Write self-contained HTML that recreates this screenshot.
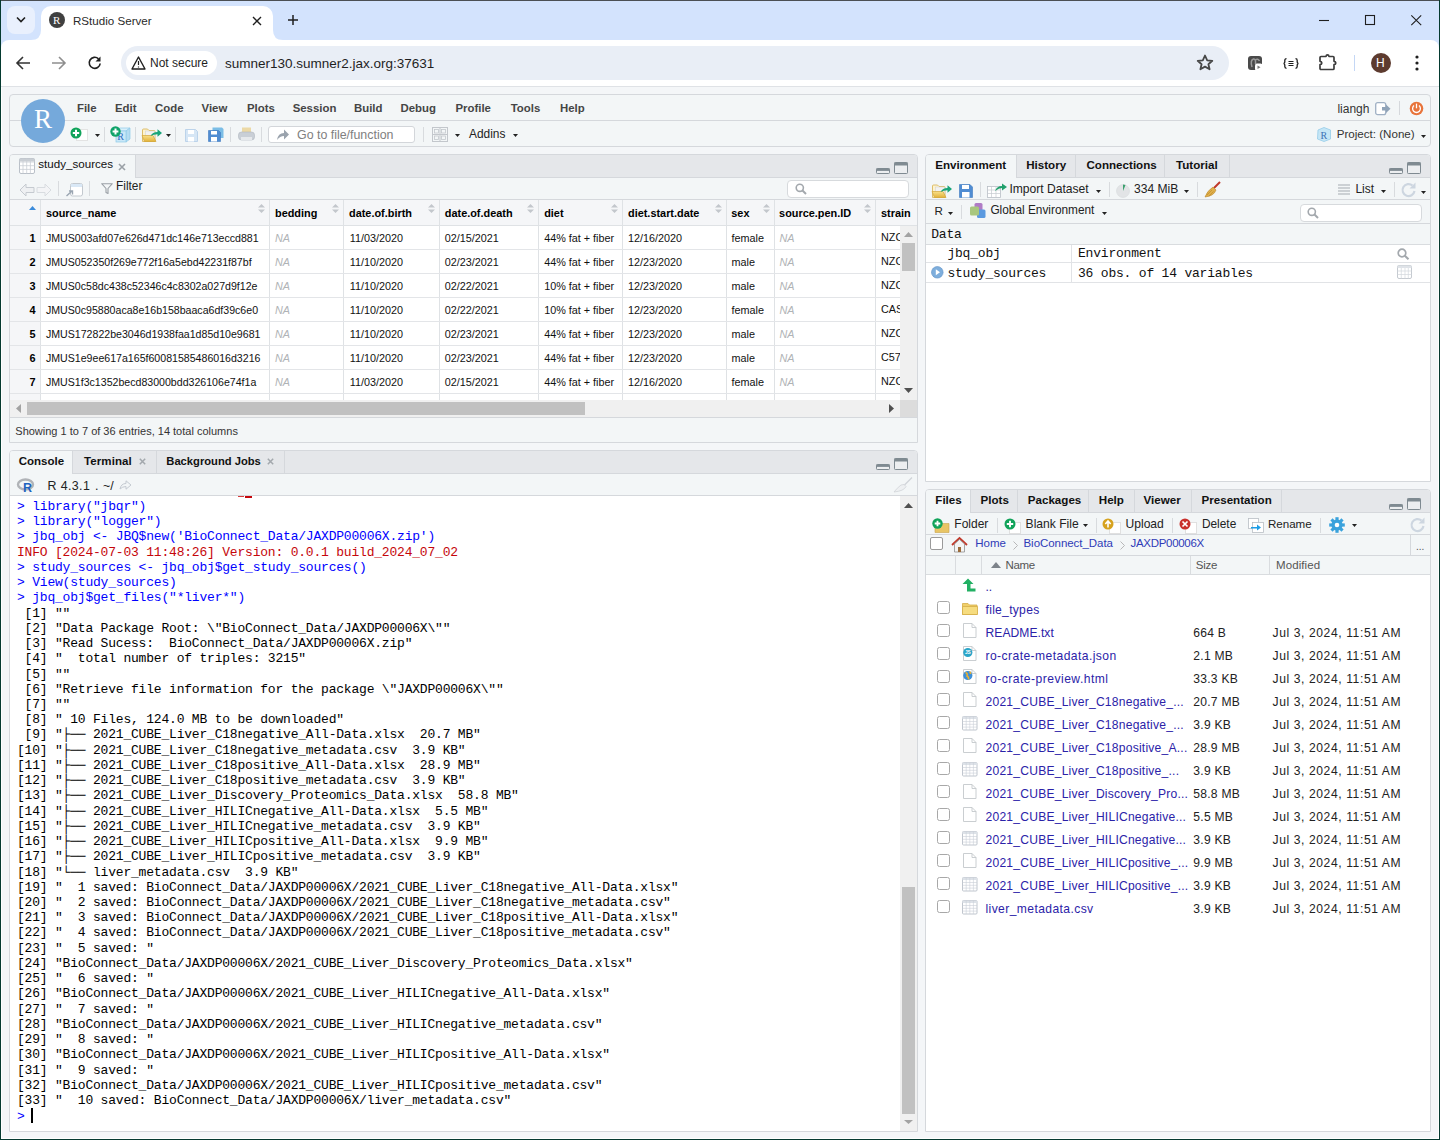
<!DOCTYPE html>
<html><head><meta charset="utf-8">
<style>
*{box-sizing:border-box}
html,body{margin:0;padding:0}
body{width:1440px;height:1140px;position:relative;overflow:hidden;background:#f4f6f8;font-family:"Liberation Sans",sans-serif;color:#000}
.a{position:absolute}
.t{position:absolute;white-space:nowrap;line-height:1}
.mono{font-family:"Liberation Mono",monospace}
svg{position:absolute;overflow:visible}
</style></head><body>
<!-- window frame -->
<div class="a" style="left:0;top:0;width:1440px;height:1px;background:#4b4f54"></div>
<div class="a" style="left:1px;top:1px;width:1px;height:1138px;background:#fff"></div>
<div class="a" style="left:1438px;top:1px;width:1px;height:1138px;background:#fff"></div>
<div class="a" style="left:1px;top:1138px;width:1438px;height:1px;background:#fff"></div>
<div class="a" style="left:0;top:0;width:1px;height:1140px;background:#053a30"></div>
<div class="a" style="left:1439px;top:0;width:1px;height:1140px;background:#053a30"></div>
<div class="a" style="left:0;top:1139px;width:1440px;height:1px;background:#053a30"></div>

<!-- CHROME TAB STRIP -->
<div class="a" style="left:1px;top:1px;width:1438px;height:39px;background:#d3e3fd"></div>
<div class="a" style="left:7px;top:6px;width:28px;height:28px;border-radius:8px;background:#e9f0fd"></div>
<svg style="left:0;top:0" width="40" height="40"><path d="M17 17.5 L21 21.5 L25 17.5" fill="none" stroke="#1f1f1f" stroke-width="1.6"/></svg>
<!-- active tab -->
<div class="a" style="left:41px;top:6px;width:232px;height:35px;background:#fff;border-radius:10px 10px 0 0"></div>
<svg style="left:31px;top:30px" width="252" height="11"><path d="M0 10 Q10 10 10 0 L10 10 Z" fill="#fff"/><path d="M242 0 Q242 10 252 10 L242 10 Z" fill="#fff"/></svg>
<div class="a" style="left:49px;top:12px;width:16px;height:16px;border-radius:50%;background:#404040"></div>
<div class="t" style="left:53px;top:15px;font-family:'Liberation Serif',serif;font-size:11px;color:#fff">R</div>
<div class="t" style="left:73px;top:15px;font-size:11.6px;color:#2a2a2a">RStudio Server</div>
<svg style="left:252px;top:16px" width="10" height="10"><path d="M1 1 L9 9 M9 1 L1 9" stroke="#1f1f1f" stroke-width="1.4"/></svg>
<svg style="left:288px;top:15px" width="10" height="10"><path d="M5 0 V10 M0 5 H10" stroke="#1f1f1f" stroke-width="1.5"/></svg>
<!-- window controls -->
<svg style="left:1319px;top:20px" width="11" height="2"><path d="M0 0.5 H10" stroke="#1f1f1f" stroke-width="1.1"/></svg>
<svg style="left:1365px;top:15px" width="11" height="11"><rect x="0.5" y="0.5" width="9" height="9" fill="none" stroke="#1f1f1f" stroke-width="1.1"/></svg>
<svg style="left:1411px;top:15px" width="11" height="11"><path d="M0.3 0.3 L10.2 10.2 M10.2 0.3 L0.3 10.2" stroke="#1f1f1f" stroke-width="1.1"/></svg>

<!-- CHROME TOOLBAR -->
<div class="a" style="left:1px;top:40px;width:1438px;height:8px;background:#d3e3fd"></div><div class="a" style="left:1px;top:40px;width:1438px;height:47px;background:#fff;border-radius:8px 8px 0 0"></div>
<div class="a" style="left:1px;top:86px;width:1438px;height:1px;background:#dfe2e6"></div>
<svg style="left:15px;top:55px" width="16" height="16"><path d="M15 8 H2 M8 2 L2 8 L8 14" fill="none" stroke="#333" stroke-width="1.6"/></svg>
<svg style="left:51px;top:55px" width="16" height="16"><path d="M1 8 H14 M8 2 L14 8 L8 14" fill="none" stroke="#8e8e8e" stroke-width="1.6"/></svg>
<svg style="left:87px;top:55px" width="16" height="16"><path d="M13.2 8.5 A5.5 5.5 0 1 1 11.5 3.8" fill="none" stroke="#1f1f1f" stroke-width="1.6"/><path d="M13.5 1.5 V6.5 H8.5 Z" fill="#1f1f1f"/></svg>
<div class="a" style="left:121px;top:46px;width:1108px;height:34px;border-radius:17px;background:#e9eef6"></div>
<div class="a" style="left:126px;top:51px;width:91px;height:24px;border-radius:12px;background:#fff"></div>
<svg style="left:131px;top:56px" width="15" height="14"><path d="M7.5 1 L14 13 H1 Z" fill="none" stroke="#1f1f1f" stroke-width="1.4" stroke-linejoin="round"/><path d="M7.5 5 V9 M7.5 10.5 V11.5" stroke="#1f1f1f" stroke-width="1.2"/></svg>
<div class="t" style="left:150px;top:57px;font-size:12px;color:#1f1f1f">Not secure</div>
<div class="t" style="left:225px;top:57px;font-size:13.5px;color:#1f1f1f">sumner130.sumner2.jax.org:37631</div>
<svg style="left:1196px;top:54px" width="18" height="18"><path d="M9 1.5 L11.2 6.3 L16.3 6.8 L12.4 10.2 L13.6 15.3 L9 12.6 L4.4 15.3 L5.6 10.2 L1.7 6.8 L6.8 6.3 Z" fill="none" stroke="#474747" stroke-width="1.8" stroke-linejoin="round"/></svg>
<svg style="left:1247px;top:55px" width="17" height="17"><rect x="1" y="1" width="14" height="14" rx="3" fill="#4a4a4a"/><path d="M5 12 Q3 5 6.5 4 Q9 3.5 8.5 9 M8 5 Q11 3 12.5 6" fill="none" stroke="#9a9a9a" stroke-width="1.5"/><rect x="8" y="8.5" width="7.5" height="7.5" rx="2" fill="#fff"/><path d="M10.5 10.5 L13.5 12.2 L10.5 14 Z" fill="#777"/></svg>
<svg style="left:1283px;top:58px" width="16" height="11"><path d="M3.5 0.7 Q1.8 0.7 1.8 2.5 V4 Q1.8 5.3 0.6 5.5 Q1.8 5.7 1.8 7 V8.5 Q1.8 10.3 3.5 10.3 M12.5 0.7 Q14.2 0.7 14.2 2.5 V4 Q14.2 5.3 15.4 5.5 Q14.2 5.7 14.2 7 V8.5 Q14.2 10.3 12.5 10.3" fill="none" stroke="#1f1f1f" stroke-width="1.3"/><path d="M5.5 3.5 H10.5 M5.5 5.5 H10.5 M5.5 7.5 H10.5" stroke="#1f1f1f" stroke-width="1.1"/></svg>
<svg style="left:1318px;top:52px" width="21" height="20"><path d="M3 4.5 H8 Q8.2 2.8 9.5 2.8 Q10.8 2.8 11 4.5 H15 Q16 4.5 16 5.5 V9.3 Q17.8 9.5 17.8 11 Q17.8 12.5 16 12.7 V16.5 Q16 17.5 15 17.5 H3 Q2 17.5 2 16.5 V12.7 Q3.8 12.5 3.8 11 Q3.8 9.5 2 9.3 V5.5 Q2 4.5 3 4.5 Z" fill="none" stroke="#3c3c3c" stroke-width="1.7" stroke-linejoin="round"/></svg>
<div class="a" style="left:1354px;top:55px;width:1px;height:16px;background:#c4d7f5"></div>
<div class="a" style="left:1371px;top:53px;width:20px;height:20px;border-radius:50%;background:#5d3b2f"></div>
<div class="t" style="left:1376px;top:57px;font-size:12px;color:#fff">H</div>
<svg style="left:1414px;top:55px" width="6" height="16"><circle cx="3" cy="2" r="1.6" fill="#1f1f1f"/><circle cx="3" cy="8" r="1.6" fill="#1f1f1f"/><circle cx="3" cy="14" r="1.6" fill="#1f1f1f"/></svg>

<!-- RSTUDIO MENU + TOOLBAR -->
<div class="a" style="left:9px;top:94px;width:1422px;height:53px;border:1px solid #d5d8dc;border-radius:4px;background:#f3f6f7"></div>
<div class="a" style="left:10px;top:120px;width:1420px;height:1px;background:#d5d8dc"></div>
<div class="a" style="left:21px;top:99px;width:44px;height:44px;border-radius:50%;background:#75a9db"></div>
<div class="t" style="left:34px;top:106px;font-family:'Liberation Serif',serif;font-size:27px;color:#fff">R</div>

<!-- menu items -->
<div class="t" style="top:103px;font-size:11.4px;font-weight:bold;color:#454545;left:77px">File</div>
<div class="t" style="top:103px;font-size:11.4px;font-weight:bold;color:#454545;left:115px">Edit</div>
<div class="t" style="top:103px;font-size:11.4px;font-weight:bold;color:#454545;left:155px">Code</div>
<div class="t" style="top:103px;font-size:11.4px;font-weight:bold;color:#454545;left:201.5px">View</div>
<div class="t" style="top:103px;font-size:11.4px;font-weight:bold;color:#454545;left:247px">Plots</div>
<div class="t" style="top:103px;font-size:11.4px;font-weight:bold;color:#454545;left:292.7px">Session</div>
<div class="t" style="top:103px;font-size:11.4px;font-weight:bold;color:#454545;left:354px">Build</div>
<div class="t" style="top:103px;font-size:11.4px;font-weight:bold;color:#454545;left:400.5px">Debug</div>
<div class="t" style="top:103px;font-size:11.4px;font-weight:bold;color:#454545;left:455.5px">Profile</div>
<div class="t" style="top:103px;font-size:11.4px;font-weight:bold;color:#454545;left:510.7px">Tools</div>
<div class="t" style="top:103px;font-size:11.4px;font-weight:bold;color:#454545;left:560px">Help</div>
<div class="t" style="top:102.8px;font-size:12px;color:#333;left:1337.4px">liangh</div>
<svg style="left:1375px;top:102px" width="17" height="14"><rect x="0.7" y="0.7" width="10" height="12" rx="2" fill="#fff" stroke="#9fb0c4" stroke-width="1.3"/><path d="M7 5 H11 V2.5 L15.5 6.7 L11 11 V8.5 H7 Z" fill="#8fa3b8"/></svg>
<div class="a" style="left:1399px;top:101px;width:1px;height:14px;background:#d5d8dc"></div>
<svg style="left:1409px;top:101px" width="15" height="15"><circle cx="7.5" cy="7.5" r="6.8" fill="#e8743b"/><path d="M5 4.6 A3.9 3.9 0 1 0 10 4.6" fill="none" stroke="#fff" stroke-width="1.3"/><path d="M7.5 2.6 V7.3" stroke="#fff" stroke-width="1.3"/></svg>

<!-- toolbar icons -->
<div class="a" style="left:76px;top:129px;width:12px;height:12px;background:#fff;border:1px solid #e3e3e3"></div>
<svg style="left:70px;top:127px" width="12" height="12"><circle cx="6" cy="6" r="5.5" fill="#10a35a"/><path d="M6 2.8 V9.2 M2.8 6 H9.2" stroke="#fff" stroke-width="2"/></svg>
<svg style="left:95.0px;top:133.5px" width="5" height="3"><path d="M0 0 H5 L2.5 3 Z" fill="#222"/></svg>
<div class="a" style="left:104px;top:127px;width:1px;height:15px;background:#d8dbde"></div>
<svg style="left:110px;top:126px" width="22" height="19"><path d="M6 5 L10 2 H20 L16 5 Z" fill="#d9effb" stroke="#8ecae8" stroke-width="0.7"/><path d="M16 5 L20 2 V13 L16 16 Z" fill="#b4dcf2" stroke="#8ecae8" stroke-width="0.7"/><rect x="6" y="5" width="10" height="11" fill="#c9e7f8" stroke="#8ecae8" stroke-width="0.7"/><text x="7.2" y="13.8" font-family="Liberation Serif" font-size="10" fill="#2a6cc0">R</text><circle cx="5.5" cy="5.5" r="5.2" fill="#10a36a"/><path d="M5.5 2.6 V8.4 M2.6 5.5 H8.4" stroke="#fff" stroke-width="2"/></svg>
<div class="a" style="left:135px;top:127px;width:1px;height:15px;background:#d8dbde"></div>
<svg style="left:141px;top:127px" width="22" height="16"><defs><linearGradient id="fg" x1="0" y1="0" x2="0" y2="1"><stop offset="0" stop-color="#f9e08a"/><stop offset="1" stop-color="#e2b23a"/></linearGradient></defs><path d="M1.5 3 Q1.5 2 2.5 2 H6.5 L8 3.5 H13 Q14 3.5 14 4.5 V14.5 H1.5 Z" fill="#fdf3cf" stroke="#d6b04e" stroke-width="0.8"/><rect x="4.5" y="4" width="9" height="7" fill="#f2f2f2" stroke="#cfcfcf" stroke-width="0.5"/><path d="M1 8.5 H12 L15 14.5 H3.5 Z" fill="url(#fg)" stroke="#d3a63a" stroke-width="0.7"/><path d="M9.5 9 Q11.5 5 16.5 5 V2.2 L21 6 L16.5 9.8 V7.2 Q12.5 7.2 9.5 9 Z" fill="#19a57a"/></svg>
<svg style="left:166.0px;top:133.5px" width="5" height="3"><path d="M0 0 H5 L2.5 3 Z" fill="#222"/></svg>
<div class="a" style="left:175px;top:127px;width:1px;height:15px;background:#d8dbde"></div>
<svg style="left:185px;top:129px" width="13" height="13"><path d="M0.5 0.5 H10.5 L12.5 2.5 V12.5 H0.5 Z" fill="#d6e6f5" stroke="#bcd3ea"/><rect x="3" y="1" width="6" height="4" fill="#fff"/><rect x="3" y="8" width="6" height="4.5" fill="#fff"/></svg>
<svg style="left:208px;top:127px" width="16" height="15"><path d="M4.5 0.5 H14 L15.5 2 V11 H4.5 Z" fill="#7bbde6"/><path d="M0.5 3.5 H10.5 L12.5 5.5 V14.5 H0.5 Z" fill="#4f8cd2" stroke="#3c78c0" stroke-width="0.6"/><rect x="3" y="4" width="6" height="3.5" fill="#fff"/><rect x="3" y="10" width="6" height="4.5" fill="#fff"/></svg>
<div class="a" style="left:230px;top:127px;width:1px;height:15px;background:#d8dbde"></div>
<svg style="left:238px;top:127px" width="17" height="15"><rect x="4" y="0.5" width="9" height="7" fill="#ecd9a6"/><rect x="0.5" y="5" width="16" height="8" rx="3" fill="#c9cfd6" stroke="#b0b7bf" stroke-width="0.6"/><rect x="3" y="10" width="11" height="3" fill="#e6e9ec"/></svg>
<div class="a" style="left:261px;top:127px;width:1px;height:15px;background:#d8dbde"></div>
<div class="a" style="left:268px;top:126px;width:147px;height:17px;border:1px solid #d3d6da;border-radius:3px;background:#fff"></div>
<svg style="left:276px;top:128px" width="14" height="13"><path d="M1 12 Q2 5 8 5 V1.5 L13 6.5 L8 11.5 V8 Q4 8 1 12 Z" fill="#9aa3ad"/></svg>
<div class="t" style="left:297px;top:129px;font-size:12.4px;color:#808080;width:97px;overflow:hidden">Go to file/function</div>
<div class="a" style="left:423px;top:127px;width:1px;height:15px;background:#d8dbde"></div>
<svg style="left:432px;top:127px" width="16" height="15"><rect x="0.5" y="0.5" width="15" height="14" fill="none" stroke="#c3c7cc"/><path d="M1 7.5 H15 M8 1 V14" stroke="#c3c7cc"/><rect x="2.5" y="2.5" width="4" height="3.5" fill="none" stroke="#c3c7cc" stroke-width="0.8"/><rect x="9.5" y="2.5" width="4" height="3.5" fill="none" stroke="#c3c7cc" stroke-width="0.8"/><rect x="2.5" y="9" width="4" height="3.5" fill="none" stroke="#c3c7cc" stroke-width="0.8"/><rect x="9.5" y="9" width="4" height="3.5" fill="none" stroke="#c3c7cc" stroke-width="0.8"/></svg>
<svg style="left:455.0px;top:133.5px" width="5" height="3"><path d="M0 0 H5 L2.5 3 Z" fill="#222"/></svg>
<div class="t" style="left:469px;top:128.5px;font-size:11.9px;color:#222">Addins</div>
<svg style="left:513.0px;top:133.5px" width="5" height="3"><path d="M0 0 H5 L2.5 3 Z" fill="#222"/></svg>
<svg style="left:1316px;top:127px" width="16" height="15"><path d="M2 3 L8 0.5 L14.5 3 V12 L8 14.5 L1.5 12 Z" fill="#c5e6f6" stroke="#94cbe8" stroke-width="0.8"/><text x="4.5" y="11.5" font-family="Liberation Serif" font-size="10" fill="#3b72b5">R</text></svg>
<div class="t" style="left:1336.7px;top:127.5px;font-size:11.6px;color:#333">Project: (None)</div>
<svg style="left:1421.0px;top:134.5px" width="5" height="3"><path d="M0 0 H5 L2.5 3 Z" fill="#222"/></svg>

<div class="a" style="left:9px;top:154px;width:909px;height:289px;background:#f3f6f7;border:1px solid #d5d8dc;border-radius:4px 4px 0 0"></div>
<div class="a" style="left:10px;top:155px;width:907px;height:22px;background:#e5e7ea;border-radius:3px 3px 0 0"></div>
<div class="a" style="left:10px;top:177px;width:907px;height:1px;background:#d5d8dc"></div>
<div class="a" style="left:10px;top:155px;width:126px;height:23px;background:#f3f6f7;border-right:1px solid #d5d8dc;border-radius:3px 0 0 0"></div>
<svg style="left:19px;top:158px" width="16" height="16"><rect x="0.5" y="0.5" width="15" height="15" rx="1.5" fill="#fff" stroke="#b9c0c8"/><path d="M0.5 4 H15.5 M0.5 7.7 H15.5 M0.5 11.4 H15.5 M4 0.5 V15.5 M7.7 0.5 V15.5 M11.4 0.5 V15.5" stroke="#c9ced4" stroke-width="0.8"/><rect x="0.5" y="0.5" width="15" height="3" fill="#c9ced4"/></svg>
<div class="t" style="left:38.3px;top:158px;font-size:11.6px;color:#111">study_sources</div>
<svg style="left:118px;top:163px" width="8" height="8"><path d="M1 1 L7 7 M7 1 L1 7" stroke="#9aa0a6" stroke-width="1.6"/></svg>
<svg style="left:876px;top:168px" width="14" height="6"><rect x="0.5" y="0.5" width="13" height="5" rx="0.8" fill="#eceef0" stroke="#7f8a91" stroke-width="1"/><path d="M0.5 1.7 H13.5" stroke="#7f8a91" stroke-width="2.4"/></svg>
<svg style="left:894px;top:162px" width="14" height="12"><rect x="0.5" y="0.5" width="13" height="11" rx="0.8" fill="#eceef0" stroke="#7f8a91" stroke-width="1"/><path d="M0.5 2 H13.5" stroke="#7f8a91" stroke-width="3"/></svg>
<div class="a" style="left:10px;top:199px;width:907px;height:1px;background:#d5d8dc"></div>
<svg style="left:19px;top:183px" width="16" height="14"><path d="M7 1 L1 7 L7 13 V9.5 H15 V4.5 H7 Z" fill="#eef0f2" stroke="#c5cad0" stroke-width="1"/></svg>
<svg style="left:36px;top:183px" width="16" height="14"><path d="M9 1 L15 7 L9 13 V9.5 H1 V4.5 H9 Z" fill="#f3f4f6" stroke="#d8dce0" stroke-width="1"/></svg>
<div class="a" style="left:58px;top:181px;width:1px;height:15px;background:#d8dbde"></div>
<svg style="left:66px;top:183px" width="17" height="14"><rect x="4.5" y="0.5" width="12" height="12.5" rx="2" fill="#fff" stroke="#c3c9cf"/><path d="M5 1 H16 V4 H5 Z" fill="#d9e8f6"/><path d="M0.5 13 L6 8 M3 8 H6.5 V11.5" stroke="#9aa5b1" stroke-width="1.4" fill="none"/></svg>
<div class="a" style="left:89px;top:181px;width:1px;height:15px;background:#d8dbde"></div>
<svg style="left:101px;top:183px" width="12" height="11"><path d="M0.7 0.7 H11.3 L7 5.5 V10.5 L5 9.5 V5.5 Z" fill="none" stroke="#9aa0a6" stroke-width="1.1" stroke-linejoin="round"/></svg>
<div class="t" style="left:116px;top:181px;font-size:11.9px;color:#222">Filter</div>
<div class="a" style="left:787px;top:180px;width:122px;height:18px;background:#fff;border:1px solid #d7dadd;border-radius:4px"></div>
<svg style="left:795px;top:183px" width="12" height="12"><circle cx="4.8" cy="4.8" r="3.6" fill="none" stroke="#a3a8ad" stroke-width="1.6"/><path d="M7.5 7.5 L11 11" stroke="#a3a8ad" stroke-width="2"/></svg>
<div class="a" style="left:10px;top:200px;width:907px;height:200px;background:#fff"></div>
<div class="a" style="left:10px;top:200px;width:907px;height:25px;background:#f5f6f8"></div>
<div class="a" style="left:10px;top:225px;width:907px;height:1px;background:#dfe2e5"></div>
<div class="a" style="left:10px;top:226px;width:30px;height:174px;background:#f5f6f8"></div>
<div class="a" style="left:40px;top:200px;width:1px;height:200px;background:#dfe2e5"></div>
<div class="a" style="left:269px;top:200px;width:1px;height:200px;background:#dfe2e5"></div>
<div class="a" style="left:343px;top:200px;width:1px;height:200px;background:#dfe2e5"></div>
<div class="a" style="left:439px;top:200px;width:1px;height:200px;background:#dfe2e5"></div>
<div class="a" style="left:538px;top:200px;width:1px;height:200px;background:#dfe2e5"></div>
<div class="a" style="left:622px;top:200px;width:1px;height:200px;background:#dfe2e5"></div>
<div class="a" style="left:726px;top:200px;width:1px;height:200px;background:#dfe2e5"></div>
<div class="a" style="left:774px;top:200px;width:1px;height:200px;background:#dfe2e5"></div>
<div class="a" style="left:875px;top:200px;width:1px;height:200px;background:#dfe2e5"></div>
<svg style="left:29px;top:206px" width="7" height="4"><path d="M0 4 L3.5 0 L7 4 Z" fill="#3b8bdb"/></svg>
<div class="t" style="left:46px;top:208px;font-size:10.9px;color:#000;font-weight:bold">source_name</div>
<div class="t" style="left:275px;top:208px;font-size:10.9px;color:#000;font-weight:bold">bedding</div>
<div class="t" style="left:349px;top:208px;font-size:10.9px;color:#000;font-weight:bold">date.of.birth</div>
<div class="t" style="left:444.8px;top:208px;font-size:10.9px;color:#000;font-weight:bold">date.of.death</div>
<div class="t" style="left:544.2px;top:208px;font-size:10.9px;color:#000;font-weight:bold">diet</div>
<div class="t" style="left:628px;top:208px;font-size:10.9px;color:#000;font-weight:bold">diet.start.date</div>
<div class="t" style="left:731.3px;top:208px;font-size:10.9px;color:#000;font-weight:bold">sex</div>
<div class="t" style="left:779.1px;top:208px;font-size:10.9px;color:#000;font-weight:bold">source.pen.ID</div>
<div class="t" style="left:881px;top:208px;font-size:10.9px;color:#000;font-weight:bold">strain</div>
<svg style="left:258px;top:204px" width="7" height="9"><path d="M0 3.5 L3.5 0 L7 3.5 Z M0 5.5 L3.5 9 L7 5.5 Z" fill="#c3c7cc"/></svg>
<svg style="left:332px;top:204px" width="7" height="9"><path d="M0 3.5 L3.5 0 L7 3.5 Z M0 5.5 L3.5 9 L7 5.5 Z" fill="#c3c7cc"/></svg>
<svg style="left:428px;top:204px" width="7" height="9"><path d="M0 3.5 L3.5 0 L7 3.5 Z M0 5.5 L3.5 9 L7 5.5 Z" fill="#c3c7cc"/></svg>
<svg style="left:527px;top:204px" width="7" height="9"><path d="M0 3.5 L3.5 0 L7 3.5 Z M0 5.5 L3.5 9 L7 5.5 Z" fill="#c3c7cc"/></svg>
<svg style="left:611px;top:204px" width="7" height="9"><path d="M0 3.5 L3.5 0 L7 3.5 Z M0 5.5 L3.5 9 L7 5.5 Z" fill="#c3c7cc"/></svg>
<svg style="left:715px;top:204px" width="7" height="9"><path d="M0 3.5 L3.5 0 L7 3.5 Z M0 5.5 L3.5 9 L7 5.5 Z" fill="#c3c7cc"/></svg>
<svg style="left:763px;top:204px" width="7" height="9"><path d="M0 3.5 L3.5 0 L7 3.5 Z M0 5.5 L3.5 9 L7 5.5 Z" fill="#c3c7cc"/></svg>
<svg style="left:864px;top:204px" width="7" height="9"><path d="M0 3.5 L3.5 0 L7 3.5 Z M0 5.5 L3.5 9 L7 5.5 Z" fill="#c3c7cc"/></svg>
<div class="a" style="left:10px;top:249px;width:907px;height:1px;background:#e3e5e8"></div>
<div class="t" style="left:29.5px;top:233px;font-size:10.9px;color:#000;font-weight:bold">1</div>
<div class="t" style="left:46px;top:233px;font-size:10.6px;color:#111">JMUS003afd07e626d471dc146e713eccd881</div>
<div class="t" style="left:275px;top:233px;font-size:10.8px;color:#b0b3b6;font-style:italic">NA</div>
<div class="t" style="left:349.7px;top:233px;font-size:10.8px;color:#111">11/03/2020</div>
<div class="t" style="left:444.8px;top:233px;font-size:10.8px;color:#111">02/15/2021</div>
<div class="t" style="left:544.2px;top:233px;font-size:10.8px;color:#111">44% fat + fiber</div>
<div class="t" style="left:628px;top:233px;font-size:10.8px;color:#111">12/16/2020</div>
<div class="t" style="left:731.5px;top:233px;font-size:10.8px;color:#111">female</div>
<div class="t" style="left:779.5px;top:233px;font-size:10.8px;color:#b0b3b6;font-style:italic">NA</div>
<div class="a" style="left:881px;top:232.40px;width:19px;height:14px;overflow:hidden"><div class="t" style="left:0;top:0;font-size:10.8px;color:#111">NZC</div></div>
<div class="a" style="left:10px;top:273px;width:907px;height:1px;background:#e3e5e8"></div>
<div class="t" style="left:29.5px;top:257px;font-size:10.9px;color:#000;font-weight:bold">2</div>
<div class="t" style="left:46px;top:257px;font-size:10.6px;color:#111">JMUS052350f269e772f16a5ebd42231f87bf</div>
<div class="t" style="left:275px;top:257px;font-size:10.8px;color:#b0b3b6;font-style:italic">NA</div>
<div class="t" style="left:349.7px;top:257px;font-size:10.8px;color:#111">11/10/2020</div>
<div class="t" style="left:444.8px;top:257px;font-size:10.8px;color:#111">02/23/2021</div>
<div class="t" style="left:544.2px;top:257px;font-size:10.8px;color:#111">44% fat + fiber</div>
<div class="t" style="left:628px;top:257px;font-size:10.8px;color:#111">12/23/2020</div>
<div class="t" style="left:731.5px;top:257px;font-size:10.8px;color:#111">male</div>
<div class="t" style="left:779.5px;top:257px;font-size:10.8px;color:#b0b3b6;font-style:italic">NA</div>
<div class="a" style="left:881px;top:256.40px;width:19px;height:14px;overflow:hidden"><div class="t" style="left:0;top:0;font-size:10.8px;color:#111">NZC</div></div>
<div class="a" style="left:10px;top:297px;width:907px;height:1px;background:#e3e5e8"></div>
<div class="t" style="left:29.5px;top:281px;font-size:10.9px;color:#000;font-weight:bold">3</div>
<div class="t" style="left:46px;top:281px;font-size:10.6px;color:#111">JMUS0c58dc438c52346c4c8302a027d9f12e</div>
<div class="t" style="left:275px;top:281px;font-size:10.8px;color:#b0b3b6;font-style:italic">NA</div>
<div class="t" style="left:349.7px;top:281px;font-size:10.8px;color:#111">11/10/2020</div>
<div class="t" style="left:444.8px;top:281px;font-size:10.8px;color:#111">02/22/2021</div>
<div class="t" style="left:544.2px;top:281px;font-size:10.8px;color:#111">10% fat + fiber</div>
<div class="t" style="left:628px;top:281px;font-size:10.8px;color:#111">12/23/2020</div>
<div class="t" style="left:731.5px;top:281px;font-size:10.8px;color:#111">male</div>
<div class="t" style="left:779.5px;top:281px;font-size:10.8px;color:#b0b3b6;font-style:italic">NA</div>
<div class="a" style="left:881px;top:280.40px;width:19px;height:14px;overflow:hidden"><div class="t" style="left:0;top:0;font-size:10.8px;color:#111">NZC</div></div>
<div class="a" style="left:10px;top:321px;width:907px;height:1px;background:#e3e5e8"></div>
<div class="t" style="left:29.5px;top:305px;font-size:10.9px;color:#000;font-weight:bold">4</div>
<div class="t" style="left:46px;top:305px;font-size:10.6px;color:#111">JMUS0c95880aca8e16b158baaca6df39c6e0</div>
<div class="t" style="left:275px;top:305px;font-size:10.8px;color:#b0b3b6;font-style:italic">NA</div>
<div class="t" style="left:349.7px;top:305px;font-size:10.8px;color:#111">11/10/2020</div>
<div class="t" style="left:444.8px;top:305px;font-size:10.8px;color:#111">02/22/2021</div>
<div class="t" style="left:544.2px;top:305px;font-size:10.8px;color:#111">10% fat + fiber</div>
<div class="t" style="left:628px;top:305px;font-size:10.8px;color:#111">12/23/2020</div>
<div class="t" style="left:731.5px;top:305px;font-size:10.8px;color:#111">female</div>
<div class="t" style="left:779.5px;top:305px;font-size:10.8px;color:#b0b3b6;font-style:italic">NA</div>
<div class="a" style="left:881px;top:304.40px;width:19px;height:14px;overflow:hidden"><div class="t" style="left:0;top:0;font-size:10.8px;color:#111">CAS</div></div>
<div class="a" style="left:10px;top:345px;width:907px;height:1px;background:#e3e5e8"></div>
<div class="t" style="left:29.5px;top:329px;font-size:10.9px;color:#000;font-weight:bold">5</div>
<div class="t" style="left:46px;top:329px;font-size:10.6px;color:#111">JMUS172822be3046d1938faa1d85d10e9681</div>
<div class="t" style="left:275px;top:329px;font-size:10.8px;color:#b0b3b6;font-style:italic">NA</div>
<div class="t" style="left:349.7px;top:329px;font-size:10.8px;color:#111">11/10/2020</div>
<div class="t" style="left:444.8px;top:329px;font-size:10.8px;color:#111">02/23/2021</div>
<div class="t" style="left:544.2px;top:329px;font-size:10.8px;color:#111">44% fat + fiber</div>
<div class="t" style="left:628px;top:329px;font-size:10.8px;color:#111">12/23/2020</div>
<div class="t" style="left:731.5px;top:329px;font-size:10.8px;color:#111">male</div>
<div class="t" style="left:779.5px;top:329px;font-size:10.8px;color:#b0b3b6;font-style:italic">NA</div>
<div class="a" style="left:881px;top:328.40px;width:19px;height:14px;overflow:hidden"><div class="t" style="left:0;top:0;font-size:10.8px;color:#111">NZC</div></div>
<div class="a" style="left:10px;top:369px;width:907px;height:1px;background:#e3e5e8"></div>
<div class="t" style="left:29.5px;top:353px;font-size:10.9px;color:#000;font-weight:bold">6</div>
<div class="t" style="left:46px;top:353px;font-size:10.6px;color:#111">JMUS1e9ee617a165f60081585486016d3216</div>
<div class="t" style="left:275px;top:353px;font-size:10.8px;color:#b0b3b6;font-style:italic">NA</div>
<div class="t" style="left:349.7px;top:353px;font-size:10.8px;color:#111">11/10/2020</div>
<div class="t" style="left:444.8px;top:353px;font-size:10.8px;color:#111">02/23/2021</div>
<div class="t" style="left:544.2px;top:353px;font-size:10.8px;color:#111">44% fat + fiber</div>
<div class="t" style="left:628px;top:353px;font-size:10.8px;color:#111">12/23/2020</div>
<div class="t" style="left:731.5px;top:353px;font-size:10.8px;color:#111">male</div>
<div class="t" style="left:779.5px;top:353px;font-size:10.8px;color:#b0b3b6;font-style:italic">NA</div>
<div class="a" style="left:881px;top:352.40px;width:19px;height:14px;overflow:hidden"><div class="t" style="left:0;top:0;font-size:10.8px;color:#111">C57</div></div>
<div class="a" style="left:10px;top:393px;width:907px;height:1px;background:#e3e5e8"></div>
<div class="t" style="left:29.5px;top:377px;font-size:10.9px;color:#000;font-weight:bold">7</div>
<div class="t" style="left:46px;top:377px;font-size:10.6px;color:#111">JMUS1f3c1352becd83000bdd326106e74f1a</div>
<div class="t" style="left:275px;top:377px;font-size:10.8px;color:#b0b3b6;font-style:italic">NA</div>
<div class="t" style="left:349.7px;top:377px;font-size:10.8px;color:#111">11/03/2020</div>
<div class="t" style="left:444.8px;top:377px;font-size:10.8px;color:#111">02/15/2021</div>
<div class="t" style="left:544.2px;top:377px;font-size:10.8px;color:#111">44% fat + fiber</div>
<div class="t" style="left:628px;top:377px;font-size:10.8px;color:#111">12/16/2020</div>
<div class="t" style="left:731.5px;top:377px;font-size:10.8px;color:#111">female</div>
<div class="t" style="left:779.5px;top:377px;font-size:10.8px;color:#b0b3b6;font-style:italic">NA</div>
<div class="a" style="left:881px;top:376.40px;width:19px;height:14px;overflow:hidden"><div class="t" style="left:0;top:0;font-size:10.8px;color:#111">NZC</div></div>
<div class="a" style="left:900px;top:226px;width:17px;height:174px;background:#f0f0f0"></div>
<svg style="left:904px;top:232px" width="9" height="5"><path d="M0 5 L4.5 0 L9 5 Z" fill="#a3a3a3"/></svg>
<div class="a" style="left:902px;top:243px;width:13px;height:28px;background:#c1c1c1"></div>
<svg style="left:904px;top:388px" width="9" height="5"><path d="M0 0 L4.5 5 L9 0 Z" fill="#505050"/></svg>
<div class="a" style="left:10px;top:400px;width:907px;height:17px;background:#f0f0f0"></div>
<svg style="left:16px;top:404px" width="5" height="9"><path d="M5 0 L0 4.5 L5 9 Z" fill="#a3a3a3"/></svg>
<div class="a" style="left:27px;top:402px;width:558px;height:13px;background:#c1c1c1"></div>
<svg style="left:889px;top:404px" width="5" height="9"><path d="M0 0 L5 4.5 L0 9 Z" fill="#505050"/></svg>
<div class="a" style="left:900px;top:400px;width:17px;height:17px;background:#dcdcdc"></div>
<div class="a" style="left:10px;top:417px;width:907px;height:1px;background:#d5d8dc"></div>
<div class="t" style="left:15.3px;top:426px;font-size:11px;color:#333">Showing 1 to 7 of 36 entries, 14 total columns</div>
<div class="a" style="left:9px;top:450px;width:909px;height:682px;background:#fff;border:1px solid #d5d8dc;border-radius:4px 4px 0 0"></div>
<div class="a" style="left:10px;top:451px;width:907px;height:22px;background:#e5e7ea;border-radius:3px 3px 0 0"></div>
<div class="a" style="left:10px;top:473px;width:907px;height:1px;background:#d5d8dc"></div>
<div class="a" style="left:10px;top:451px;width:63px;height:23px;background:#f3f6f7;border-right:1px solid #d5d8dc;border-radius:3px 0 0 0"></div>
<div class="a" style="left:73px;top:451px;width:84px;height:22px;background:#e5e7ea;border-right:1px solid #d5d8dc"></div>
<div class="a" style="left:157px;top:451px;width:128px;height:22px;background:#e5e7ea;border-right:1px solid #d5d8dc"></div>
<div class="t" style="left:18.75px;top:456px;font-size:11.5px;color:#111;font-weight:bold">Console</div>
<div class="t" style="left:84px;top:456px;font-size:11.5px;color:#111;font-weight:bold;letter-spacing:0.1px">Terminal</div>
<svg style="left:139px;top:458px" width="7" height="7"><path d="M0.8 0.8 L6.2 6.2 M6.2 0.8 L0.8 6.2" stroke="#a3a8ad" stroke-width="1.5"/></svg>
<div class="t" style="left:166.3px;top:456px;font-size:11.2px;color:#111;font-weight:bold">Background Jobs</div>
<svg style="left:267px;top:458px" width="7" height="7"><path d="M0.8 0.8 L6.2 6.2 M6.2 0.8 L0.8 6.2" stroke="#a3a8ad" stroke-width="1.5"/></svg>
<svg style="left:876px;top:464px" width="14" height="6"><rect x="0.5" y="0.5" width="13" height="5" rx="0.8" fill="#eceef0" stroke="#7f8a91" stroke-width="1"/><path d="M0.5 1.7 H13.5" stroke="#7f8a91" stroke-width="2.4"/></svg>
<svg style="left:894px;top:458px" width="14" height="12"><rect x="0.5" y="0.5" width="13" height="11" rx="0.8" fill="#eceef0" stroke="#7f8a91" stroke-width="1"/><path d="M0.5 2 H13.5" stroke="#7f8a91" stroke-width="3"/></svg>
<div class="a" style="left:10px;top:474px;width:907px;height:21px;background:#f3f6f7"></div>
<div class="a" style="left:10px;top:495px;width:907px;height:1px;background:#d5d8dc"></div>
<svg style="left:17px;top:478px" width="19" height="15"><ellipse cx="8.5" cy="6.5" rx="7.5" ry="5" fill="none" stroke="#b0b3b7" stroke-width="2.4"/><text x="6" y="14" font-family="Liberation Sans" font-weight="bold" font-size="12.5" fill="#1f63bf">R</text></svg>
<div class="t" style="left:47.5px;top:480px;font-size:12.4px;color:#222;letter-spacing:0.4px">R 4.3.1</div>
<div class="t" style="left:95px;top:480px;font-size:12.4px;color:#222">.</div>
<div class="t" style="left:103px;top:480px;font-size:12.4px;color:#222">~/</div>
<svg style="left:119px;top:480px" width="13" height="10"><path d="M1 9 Q2 3.5 7 3.5 V0.8 L12 5 L7 9.2 V6.5 Q3.5 6.5 1 9 Z" fill="none" stroke="#c4cad1" stroke-width="1"/></svg>
<svg style="left:893px;top:477px" width="20" height="16"><path d="M19 0.5 L11 8.5" stroke="#d0d4d8" stroke-width="1.2"/><path d="M11 7.5 L13 9.5 Q11 14 1 15 Q4 11 8 8 Z" fill="#eef0f2" stroke="#d0d4d8" stroke-width="0.8"/></svg>
<div class="a" style="left:900px;top:496px;width:17px;height:635px;background:#f0f0f0"></div>
<svg style="left:904px;top:503px" width="9" height="5"><path d="M0 5 L4.5 0 L9 5 Z" fill="#505050"/></svg>
<div class="a" style="left:902px;top:887px;width:13px;height:227px;background:#c1c1c1"></div>
<svg style="left:904px;top:1120px" width="9" height="4"><path d="M0 0 L4.5 4 L9 0 Z" fill="#a3a3a3"/></svg>
<div class="a" style="left:238px;top:496px;width:6px;height:1.3px;background:#d43c3c"></div>
<div class="a" style="left:245px;top:496.2px;width:7px;height:1.5px;background:#c5060b"></div>
<div class="t" style="left:17px;top:500px;font-size:13.0px;color:#0000ff;font-family:'Liberation Mono',monospace;letter-spacing:-0.2px;white-space:pre">&gt; library(&quot;jbqr&quot;)</div>
<div class="t" style="left:17px;top:515px;font-size:13.0px;color:#0000ff;font-family:'Liberation Mono',monospace;letter-spacing:-0.2px;white-space:pre">&gt; library(&quot;logger&quot;)</div>
<div class="t" style="left:17px;top:530px;font-size:13.0px;color:#0000ff;font-family:'Liberation Mono',monospace;letter-spacing:-0.2px;white-space:pre">&gt; jbq_obj &lt;- JBQ$new(&#x27;BioConnect_Data/JAXDP00006X.zip&#x27;)</div>
<div class="t" style="left:17px;top:546px;font-size:13.0px;color:#c5060b;font-family:'Liberation Mono',monospace;letter-spacing:-0.2px;white-space:pre">INFO [2024-07-03 11:48:26] Version: 0.0.1 build_2024_07_02</div>
<div class="t" style="left:17px;top:561px;font-size:13.0px;color:#0000ff;font-family:'Liberation Mono',monospace;letter-spacing:-0.2px;white-space:pre">&gt; study_sources &lt;- jbq_obj$get_study_sources()</div>
<div class="t" style="left:17px;top:576px;font-size:13.0px;color:#0000ff;font-family:'Liberation Mono',monospace;letter-spacing:-0.2px;white-space:pre">&gt; View(study_sources)</div>
<div class="t" style="left:17px;top:591px;font-size:13.0px;color:#0000ff;font-family:'Liberation Mono',monospace;letter-spacing:-0.2px;white-space:pre">&gt; jbq_obj$get_files(&quot;*liver*&quot;)</div>
<div class="t" style="left:17px;top:607px;font-size:13.0px;color:#000;font-family:'Liberation Mono',monospace;letter-spacing:-0.2px;white-space:pre"> [1] &quot;&quot;</div>
<div class="t" style="left:17px;top:622px;font-size:13.0px;color:#000;font-family:'Liberation Mono',monospace;letter-spacing:-0.2px;white-space:pre"> [2] &quot;Data Package Root: \&quot;BioConnect_Data/JAXDP00006X\&quot;&quot;</div>
<div class="t" style="left:17px;top:637px;font-size:13.0px;color:#000;font-family:'Liberation Mono',monospace;letter-spacing:-0.2px;white-space:pre"> [3] &quot;Read Sucess:  BioConnect_Data/JAXDP00006X.zip&quot;</div>
<div class="t" style="left:17px;top:652px;font-size:13.0px;color:#000;font-family:'Liberation Mono',monospace;letter-spacing:-0.2px;white-space:pre"> [4] &quot;  total number of triples: 3215&quot;</div>
<div class="t" style="left:17px;top:668px;font-size:13.0px;color:#000;font-family:'Liberation Mono',monospace;letter-spacing:-0.2px;white-space:pre"> [5] &quot;&quot;</div>
<div class="t" style="left:17px;top:683px;font-size:13.0px;color:#000;font-family:'Liberation Mono',monospace;letter-spacing:-0.2px;white-space:pre"> [6] &quot;Retrieve file information for the package \&quot;JAXDP00006X\&quot;&quot;</div>
<div class="t" style="left:17px;top:698px;font-size:13.0px;color:#000;font-family:'Liberation Mono',monospace;letter-spacing:-0.2px;white-space:pre"> [7] &quot;&quot;</div>
<div class="t" style="left:17px;top:713px;font-size:13.0px;color:#000;font-family:'Liberation Mono',monospace;letter-spacing:-0.2px;white-space:pre"> [8] &quot; 10 Files, 124.0 MB to be downloaded&quot;</div>
<div class="t" style="left:17px;top:728px;font-size:13.0px;color:#000;font-family:'Liberation Mono',monospace;letter-spacing:-0.2px;white-space:pre"> [9] &quot;├── 2021_CUBE_Liver_C18negative_All-Data.xlsx  20.7 MB&quot;</div>
<div class="t" style="left:17px;top:744px;font-size:13.0px;color:#000;font-family:'Liberation Mono',monospace;letter-spacing:-0.2px;white-space:pre">[10] &quot;├── 2021_CUBE_Liver_C18negative_metadata.csv  3.9 KB&quot;</div>
<div class="t" style="left:17px;top:759px;font-size:13.0px;color:#000;font-family:'Liberation Mono',monospace;letter-spacing:-0.2px;white-space:pre">[11] &quot;├── 2021_CUBE_Liver_C18positive_All-Data.xlsx  28.9 MB&quot;</div>
<div class="t" style="left:17px;top:774px;font-size:13.0px;color:#000;font-family:'Liberation Mono',monospace;letter-spacing:-0.2px;white-space:pre">[12] &quot;├── 2021_CUBE_Liver_C18positive_metadata.csv  3.9 KB&quot;</div>
<div class="t" style="left:17px;top:789px;font-size:13.0px;color:#000;font-family:'Liberation Mono',monospace;letter-spacing:-0.2px;white-space:pre">[13] &quot;├── 2021_CUBE_Liver_Discovery_Proteomics_Data.xlsx  58.8 MB&quot;</div>
<div class="t" style="left:17px;top:805px;font-size:13.0px;color:#000;font-family:'Liberation Mono',monospace;letter-spacing:-0.2px;white-space:pre">[14] &quot;├── 2021_CUBE_Liver_HILICnegative_All-Data.xlsx  5.5 MB&quot;</div>
<div class="t" style="left:17px;top:820px;font-size:13.0px;color:#000;font-family:'Liberation Mono',monospace;letter-spacing:-0.2px;white-space:pre">[15] &quot;├── 2021_CUBE_Liver_HILICnegative_metadata.csv  3.9 KB&quot;</div>
<div class="t" style="left:17px;top:835px;font-size:13.0px;color:#000;font-family:'Liberation Mono',monospace;letter-spacing:-0.2px;white-space:pre">[16] &quot;├── 2021_CUBE_Liver_HILICpositive_All-Data.xlsx  9.9 MB&quot;</div>
<div class="t" style="left:17px;top:850px;font-size:13.0px;color:#000;font-family:'Liberation Mono',monospace;letter-spacing:-0.2px;white-space:pre">[17] &quot;├── 2021_CUBE_Liver_HILICpositive_metadata.csv  3.9 KB&quot;</div>
<div class="t" style="left:17px;top:866px;font-size:13.0px;color:#000;font-family:'Liberation Mono',monospace;letter-spacing:-0.2px;white-space:pre">[18] &quot;└── liver_metadata.csv  3.9 KB&quot;</div>
<div class="t" style="left:17px;top:881px;font-size:13.0px;color:#000;font-family:'Liberation Mono',monospace;letter-spacing:-0.2px;white-space:pre">[19] &quot;  1 saved: BioConnect_Data/JAXDP00006X/2021_CUBE_Liver_C18negative_All-Data.xlsx&quot;</div>
<div class="t" style="left:17px;top:896px;font-size:13.0px;color:#000;font-family:'Liberation Mono',monospace;letter-spacing:-0.2px;white-space:pre">[20] &quot;  2 saved: BioConnect_Data/JAXDP00006X/2021_CUBE_Liver_C18negative_metadata.csv&quot;</div>
<div class="t" style="left:17px;top:911px;font-size:13.0px;color:#000;font-family:'Liberation Mono',monospace;letter-spacing:-0.2px;white-space:pre">[21] &quot;  3 saved: BioConnect_Data/JAXDP00006X/2021_CUBE_Liver_C18positive_All-Data.xlsx&quot;</div>
<div class="t" style="left:17px;top:926px;font-size:13.0px;color:#000;font-family:'Liberation Mono',monospace;letter-spacing:-0.2px;white-space:pre">[22] &quot;  4 saved: BioConnect_Data/JAXDP00006X/2021_CUBE_Liver_C18positive_metadata.csv&quot;</div>
<div class="t" style="left:17px;top:942px;font-size:13.0px;color:#000;font-family:'Liberation Mono',monospace;letter-spacing:-0.2px;white-space:pre">[23] &quot;  5 saved: &quot;</div>
<div class="t" style="left:17px;top:957px;font-size:13.0px;color:#000;font-family:'Liberation Mono',monospace;letter-spacing:-0.2px;white-space:pre">[24] &quot;BioConnect_Data/JAXDP00006X/2021_CUBE_Liver_Discovery_Proteomics_Data.xlsx&quot;</div>
<div class="t" style="left:17px;top:972px;font-size:13.0px;color:#000;font-family:'Liberation Mono',monospace;letter-spacing:-0.2px;white-space:pre">[25] &quot;  6 saved: &quot;</div>
<div class="t" style="left:17px;top:987px;font-size:13.0px;color:#000;font-family:'Liberation Mono',monospace;letter-spacing:-0.2px;white-space:pre">[26] &quot;BioConnect_Data/JAXDP00006X/2021_CUBE_Liver_HILICnegative_All-Data.xlsx&quot;</div>
<div class="t" style="left:17px;top:1003px;font-size:13.0px;color:#000;font-family:'Liberation Mono',monospace;letter-spacing:-0.2px;white-space:pre">[27] &quot;  7 saved: &quot;</div>
<div class="t" style="left:17px;top:1018px;font-size:13.0px;color:#000;font-family:'Liberation Mono',monospace;letter-spacing:-0.2px;white-space:pre">[28] &quot;BioConnect_Data/JAXDP00006X/2021_CUBE_Liver_HILICnegative_metadata.csv&quot;</div>
<div class="t" style="left:17px;top:1033px;font-size:13.0px;color:#000;font-family:'Liberation Mono',monospace;letter-spacing:-0.2px;white-space:pre">[29] &quot;  8 saved: &quot;</div>
<div class="t" style="left:17px;top:1048px;font-size:13.0px;color:#000;font-family:'Liberation Mono',monospace;letter-spacing:-0.2px;white-space:pre">[30] &quot;BioConnect_Data/JAXDP00006X/2021_CUBE_Liver_HILICpositive_All-Data.xlsx&quot;</div>
<div class="t" style="left:17px;top:1064px;font-size:13.0px;color:#000;font-family:'Liberation Mono',monospace;letter-spacing:-0.2px;white-space:pre">[31] &quot;  9 saved: &quot;</div>
<div class="t" style="left:17px;top:1079px;font-size:13.0px;color:#000;font-family:'Liberation Mono',monospace;letter-spacing:-0.2px;white-space:pre">[32] &quot;BioConnect_Data/JAXDP00006X/2021_CUBE_Liver_HILICpositive_metadata.csv&quot;</div>
<div class="t" style="left:17px;top:1094px;font-size:13.0px;color:#000;font-family:'Liberation Mono',monospace;letter-spacing:-0.2px;white-space:pre">[33] &quot;  10 saved: BioConnect_Data/JAXDP00006X/liver_metadata.csv&quot;</div>
<div class="t" style="left:17px;top:1110px;font-size:13.0px;color:#0000ff;font-family:'Liberation Mono',monospace">&gt;</div>
<div class="a" style="left:31px;top:1108px;width:2px;height:15px;background:#000"></div>
<div class="a" style="left:925px;top:154px;width:506px;height:328px;background:#fff;border:1px solid #d5d8dc;border-radius:4px 4px 0 0"></div>
<div class="a" style="left:926px;top:155px;width:504px;height:23px;background:#e5e7ea;border-radius:3px 3px 0 0"></div>
<div class="a" style="left:926px;top:177px;width:504px;height:1px;background:#d5d8dc"></div>
<div class="a" style="left:926px;top:155px;width:91px;height:23px;background:#f3f6f7;border-right:1px solid #d5d8dc;border-radius:3px 0 0 0"></div>
<div class="a" style="left:1017px;top:155px;width:59px;height:22px;background:#e5e7ea;border-right:1px solid #d5d8dc"></div>
<div class="a" style="left:1076px;top:155px;width:89px;height:22px;background:#e5e7ea;border-right:1px solid #d5d8dc"></div>
<div class="a" style="left:1165px;top:155px;width:65px;height:22px;background:#e5e7ea;border-right:1px solid #d5d8dc"></div>
<div class="t" style="left:935.3px;top:159px;font-size:11.6px;color:#111;font-weight:bold">Environment</div>
<div class="t" style="left:1026.2px;top:159px;font-size:11.6px;color:#111;font-weight:bold">History</div>
<div class="t" style="left:1086.5px;top:159px;font-size:11.6px;color:#111;font-weight:bold">Connections</div>
<div class="t" style="left:1176px;top:159px;font-size:11.6px;color:#111;font-weight:bold">Tutorial</div>
<svg style="left:1389px;top:168px" width="14" height="6"><rect x="0.5" y="0.5" width="13" height="5" rx="0.8" fill="#eceef0" stroke="#7f8a91" stroke-width="1"/><path d="M0.5 1.7 H13.5" stroke="#7f8a91" stroke-width="2.4"/></svg>
<svg style="left:1407px;top:162px" width="14" height="12"><rect x="0.5" y="0.5" width="13" height="11" rx="0.8" fill="#eceef0" stroke="#7f8a91" stroke-width="1"/><path d="M0.5 2 H13.5" stroke="#7f8a91" stroke-width="3"/></svg>
<div class="a" style="left:926px;top:178px;width:504px;height:21px;background:#f3f6f7"></div>
<div class="a" style="left:926px;top:199px;width:504px;height:1px;background:#d5d8dc"></div>
<svg style="left:931px;top:183px" width="22" height="16"><path d="M1.5 3 Q1.5 2 2.5 2 H6.5 L8 3.5 H13 Q14 3.5 14 4.5 V14.5 H1.5 Z" fill="#fdf3cf" stroke="#d6b04e" stroke-width="0.8"/><rect x="4.5" y="4" width="9" height="7" fill="#f2f2f2" stroke="#cfcfcf" stroke-width="0.5"/><path d="M1 8.5 H12 L15 14.5 H3.5 Z" fill="url(#fg)" stroke="#d3a63a" stroke-width="0.7"/><path d="M9.5 9 Q11.5 5 16.5 5 V2.2 L21 6 L16.5 9.8 V7.2 Q12.5 7.2 9.5 9 Z" fill="#19a57a"/></svg>
<svg style="left:959px;top:184px" width="14" height="14"><path d="M0.5 0.5 H11 L13.5 3 V13.5 H0.5 Z" fill="#4f8cd2" stroke="#3c78c0" stroke-width="0.6"/><rect x="3" y="1" width="7" height="4" fill="#fff"/><rect x="3" y="8" width="7.5" height="5.5" fill="#fff"/></svg>
<div class="a" style="left:980px;top:182px;width:1px;height:15px;background:#d8dbde"></div>
<svg style="left:987px;top:183px" width="20" height="15"><rect x="0.5" y="3.5" width="13" height="11" fill="#fff" stroke="#b8bec5" stroke-width="0.8"/><path d="M0.5 7 H13.5 M0.5 10.5 H13.5 M4.5 3.5 V14.5 M9 3.5 V14.5" stroke="#c5cad0" stroke-width="0.7"/><path d="M8 8 Q10 3 15 3 V0.5 L20 4 L15 7.5 V5 Q12 5 8 8 Z" fill="#20a06c"/></svg>
<div class="t" style="left:1009.4px;top:183px;font-size:12.1px;color:#222">Import Dataset</div>
<svg style="left:1096px;top:189.5px" width="5" height="3"><path d="M0 0 H5 L2.5 3 Z" fill="#222"/></svg>
<div class="a" style="left:1109px;top:182px;width:1px;height:15px;background:#d8dbde"></div>
<svg style="left:1116px;top:184px" width="14" height="14"><circle cx="7" cy="7" r="6.5" fill="#e2e4e6" stroke="#d3d6d9" stroke-width="0.5"/><path d="M7 7 L7 0.5 A6.5 6.5 0 0 1 9.5 1 Z" fill="#3ba06f"/></svg>
<div class="t" style="left:1134px;top:183px;font-size:12.1px;color:#222">334 MiB</div>
<svg style="left:1184px;top:189.5px" width="5" height="3"><path d="M0 0 H5 L2.5 3 Z" fill="#222"/></svg>
<div class="a" style="left:1197px;top:182px;width:1px;height:15px;background:#d8dbde"></div>
<svg style="left:1204px;top:181px" width="17" height="17"><path d="M16 1 L10 7" stroke="#c0392b" stroke-width="2"/><path d="M9 6 L12 9 Q10 15 1 16 Q3 10 9 6 Z" fill="#e0b04a" stroke="#b8862b" stroke-width="0.6"/><path d="M3 14 L8 9 M5 15 L9.5 10.5" stroke="#b8862b" stroke-width="0.6"/></svg>
<svg style="left:1338px;top:184px" width="12" height="11"><path d="M0 1 H12 M0 4 H12 M0 7 H12 M0 10 H12" stroke="#a5abb1" stroke-width="1"/></svg>
<div class="t" style="left:1355.4px;top:183px;font-size:12px;color:#222">List</div>
<svg style="left:1381px;top:189.5px" width="5" height="3"><path d="M0 0 H5 L2.5 3 Z" fill="#222"/></svg>
<div class="a" style="left:1394px;top:182px;width:1px;height:15px;background:#d8dbde"></div>
<svg style="left:1401px;top:182px" width="16" height="16"><path d="M13.5 9 A6 6 0 1 1 11.5 3.5" fill="none" stroke="#cdd6e0" stroke-width="2.2"/><path d="M14.5 0.5 V6.5 H8.5 Z" fill="#cdd6e0"/></svg>
<svg style="left:1421px;top:190.5px" width="5" height="3"><path d="M0 0 H5 L2.5 3 Z" fill="#222"/></svg>
<div class="a" style="left:926px;top:200px;width:504px;height:23px;background:#f3f6f7"></div>
<div class="a" style="left:926px;top:223px;width:504px;height:1px;background:#d5d8dc"></div>
<div class="t" style="left:934.4px;top:205px;font-size:11.6px;color:#222">R</div>
<svg style="left:948px;top:211.5px" width="5" height="3"><path d="M0 0 H5 L2.5 3 Z" fill="#222"/></svg>
<div class="a" style="left:961px;top:205px;width:1px;height:14px;background:#d8dbde"></div>
<svg style="left:970px;top:203px" width="16" height="15"><rect x="4.5" y="0" width="8" height="8" rx="1.5" fill="#b07cc6"/><rect x="7" y="6.5" width="8.5" height="8.5" rx="1.5" fill="#5b9ae0"/><rect x="0" y="3.5" width="9" height="9" rx="1.5" fill="#a9c77f"/></svg>
<div class="t" style="left:990.4px;top:205px;font-size:11.85px;color:#222">Global Environment</div>
<svg style="left:1102px;top:211.5px" width="5" height="3"><path d="M0 0 H5 L2.5 3 Z" fill="#222"/></svg>
<div class="a" style="left:1300px;top:204px;width:122px;height:18px;background:#fff;border:1px solid #d7dadd;border-radius:4px"></div>
<svg style="left:1307px;top:207px" width="12" height="12"><circle cx="4.8" cy="4.8" r="3.6" fill="none" stroke="#a3a8ad" stroke-width="1.6"/><path d="M7.5 7.5 L11 11" stroke="#a3a8ad" stroke-width="2"/></svg>
<div class="a" style="left:926px;top:224px;width:504px;height:20px;background:#f3f6f7"></div>
<div class="a" style="left:926px;top:244px;width:504px;height:1px;background:#d9dcdf"></div>
<div class="t" style="left:931.2px;top:228px;font-size:13.0px;color:#111;font-family:'Liberation Mono',monospace;letter-spacing:-0.2px">Data</div>
<div class="t" style="left:947.4px;top:247px;font-size:13.0px;color:#111;font-family:'Liberation Mono',monospace;letter-spacing:-0.2px">jbq_obj</div>
<div class="t" style="left:1078px;top:247px;font-size:13.0px;color:#111;font-family:'Liberation Mono',monospace;letter-spacing:-0.2px">Environment</div>
<div class="a" style="left:926px;top:262px;width:504px;height:1px;background:#e1e3e6"></div>
<div class="t" style="left:947.4px;top:267px;font-size:13.0px;color:#111;font-family:'Liberation Mono',monospace;letter-spacing:-0.2px">study_sources</div>
<div class="t" style="left:1078px;top:267px;font-size:13.0px;color:#111;font-family:'Liberation Mono',monospace;letter-spacing:-0.2px">36 obs. of 14 variables</div>
<div class="a" style="left:926px;top:282px;width:504px;height:1px;background:#e1e3e6"></div>
<div class="a" style="left:1071px;top:245px;width:1px;height:37px;background:#e1e3e6"></div>
<svg style="left:931px;top:266px" width="13" height="13"><circle cx="6.3" cy="6.3" r="5.8" fill="#7eaedc" stroke="#5b8fc4" stroke-width="0.6"/><path d="M4.8 3.3 L9 6.3 L4.8 9.3 Z" fill="#fff"/></svg>
<svg style="left:1397px;top:248px" width="13" height="12"><circle cx="5" cy="5" r="3.8" fill="none" stroke="#a3a8ad" stroke-width="1.7"/><path d="M7.8 7.8 L11.5 11.3" stroke="#a3a8ad" stroke-width="2.1"/></svg>
<svg style="left:1397px;top:265px" width="15" height="14"><rect x="0.5" y="0.5" width="14" height="13" rx="1.5" fill="#fff" stroke="#c5cad0"/><rect x="0.5" y="0.5" width="14" height="2.5" fill="#dfe3e8"/><path d="M0.5 6 H14.5 M0.5 9.5 H14.5 M4.3 3 V13.5 M8 3 V13.5 M11.3 3 V13.5" stroke="#d3d7dc" stroke-width="0.7"/></svg>
<div class="a" style="left:925px;top:489px;width:506px;height:643px;background:#fff;border:1px solid #d5d8dc;border-radius:4px 4px 0 0"></div>
<div class="a" style="left:926px;top:490px;width:504px;height:23px;background:#e5e7ea;border-radius:3px 3px 0 0"></div>
<div class="a" style="left:926px;top:512px;width:504px;height:1px;background:#d5d8dc"></div>
<div class="a" style="left:926px;top:490px;width:45px;height:23px;background:#f3f6f7;border-right:1px solid #d5d8dc;border-radius:3px 0 0 0"></div>
<div class="a" style="left:971px;top:490px;width:46.5px;height:22px;background:#e5e7ea;border-right:1px solid #d5d8dc"></div>
<div class="a" style="left:1017.5px;top:490px;width:71.5px;height:22px;background:#e5e7ea;border-right:1px solid #d5d8dc"></div>
<div class="a" style="left:1089px;top:490px;width:45.5px;height:22px;background:#e5e7ea;border-right:1px solid #d5d8dc"></div>
<div class="a" style="left:1134.5px;top:490px;width:57.09999999999991px;height:22px;background:#e5e7ea;border-right:1px solid #d5d8dc"></div>
<div class="a" style="left:1191.6px;top:490px;width:90.0px;height:22px;background:#e5e7ea;border-right:1px solid #d5d8dc"></div>
<div class="t" style="left:935.3px;top:494px;font-size:11.6px;color:#111;font-weight:bold">Files</div>
<div class="t" style="left:980.5px;top:494px;font-size:11.6px;color:#111;font-weight:bold">Plots</div>
<div class="t" style="left:1027.8px;top:494px;font-size:11.6px;color:#111;font-weight:bold">Packages</div>
<div class="t" style="left:1098.8px;top:494px;font-size:11.6px;color:#111;font-weight:bold">Help</div>
<div class="t" style="left:1143.5px;top:494px;font-size:11.6px;color:#111;font-weight:bold">Viewer</div>
<div class="t" style="left:1201.5px;top:494px;font-size:11.6px;color:#111;font-weight:bold">Presentation</div>
<svg style="left:1389px;top:504px" width="14" height="6"><rect x="0.5" y="0.5" width="13" height="5" rx="0.8" fill="#eceef0" stroke="#7f8a91" stroke-width="1"/><path d="M0.5 1.7 H13.5" stroke="#7f8a91" stroke-width="2.4"/></svg>
<svg style="left:1407px;top:498px" width="14" height="12"><rect x="0.5" y="0.5" width="13" height="11" rx="0.8" fill="#eceef0" stroke="#7f8a91" stroke-width="1"/><path d="M0.5 2 H13.5" stroke="#7f8a91" stroke-width="3"/></svg>
<div class="a" style="left:926px;top:513px;width:504px;height:21px;background:#f3f6f7"></div>
<div class="a" style="left:926px;top:534px;width:504px;height:1px;background:#d5d8dc"></div>
<svg style="left:932px;top:518px" width="19" height="15"><path d="M3 4 H8 L9.5 5.5 H17 V14.5 H3 Z" fill="#e8c565" stroke="#c9a34a" stroke-width="0.6"/><circle cx="5.5" cy="5.5" r="5.2" fill="#10a35a"/><path d="M5.5 2.7 V8.3 M2.7 5.5 H8.3" stroke="#fff" stroke-width="1.8"/></svg>
<div class="t" style="left:954.3px;top:518px;font-size:12px;color:#222">Folder</div>
<div class="a" style="left:997px;top:518px;width:1px;height:15px;background:#d8dbde"></div>
<div class="a" style="left:1009px;top:522px;width:12px;height:12px;background:#fff;border:1px solid #e0e0e0"></div>
<svg style="left:1004px;top:518px" width="12" height="12"><circle cx="6" cy="6" r="5.5" fill="#10a35a"/><path d="M6 2.8 V9.2 M2.8 6 H9.2" stroke="#fff" stroke-width="1.9"/></svg>
<div class="t" style="left:1025.6px;top:518px;font-size:12.1px;color:#222">Blank File</div>
<svg style="left:1083px;top:524.0px" width="5" height="3"><path d="M0 0 H5 L2.5 3 Z" fill="#222"/></svg>
<div class="a" style="left:1096px;top:518px;width:1px;height:15px;background:#d8dbde"></div>
<div class="a" style="left:1109px;top:522px;width:12px;height:12px;background:#fff;border:1px solid #e0e0e0"></div>
<svg style="left:1102px;top:518px" width="12" height="12"><circle cx="6" cy="6" r="5.5" fill="#d6a21e"/><path d="M6 9.5 V3.5 M3.3 6 L6 3 L8.7 6" stroke="#fff" stroke-width="1.6" fill="none"/></svg>
<div class="t" style="left:1125.5px;top:518px;font-size:12.1px;color:#222">Upload</div>
<div class="a" style="left:1172px;top:518px;width:1px;height:15px;background:#d8dbde"></div>
<div class="a" style="left:1185px;top:522px;width:12px;height:12px;background:#fff;border:1px solid #e0e0e0"></div>
<svg style="left:1179px;top:518px" width="12" height="12"><circle cx="6" cy="6" r="5.5" fill="#c9302c"/><path d="M3.5 3.5 L8.5 8.5 M8.5 3.5 L3.5 8.5" stroke="#fff" stroke-width="1.7"/></svg>
<div class="t" style="left:1201.9px;top:519px;font-size:11.9px;color:#222">Delete</div>
<svg style="left:1248px;top:518px" width="16" height="15"><rect x="0.5" y="0.5" width="10" height="10" fill="#fff" stroke="#b9bec4" stroke-width="0.8"/><rect x="4.5" y="4.5" width="11" height="10" fill="#fff" stroke="#b9bec4" stroke-width="0.8"/><path d="M3 9 H9 V6.5 L13 9.5 L9 12.5 V10.5 H3 Z" fill="#1e9ee6"/></svg>
<div class="t" style="left:1267.9px;top:518px;font-size:11.6px;color:#222">Rename</div>
<div class="a" style="left:1320px;top:518px;width:1px;height:15px;background:#d8dbde"></div>
<svg style="left:1329px;top:517px" width="16" height="16"><g transform="translate(8 8)"><circle r="5.6" fill="#3aa2dc"/><g fill="#3aa2dc"><rect x="-1.6" y="-7.8" width="3.2" height="3.4" transform="rotate(0)"/><rect x="-1.6" y="-7.8" width="3.2" height="3.4" transform="rotate(45)"/><rect x="-1.6" y="-7.8" width="3.2" height="3.4" transform="rotate(90)"/><rect x="-1.6" y="-7.8" width="3.2" height="3.4" transform="rotate(135)"/><rect x="-1.6" y="-7.8" width="3.2" height="3.4" transform="rotate(180)"/><rect x="-1.6" y="-7.8" width="3.2" height="3.4" transform="rotate(225)"/><rect x="-1.6" y="-7.8" width="3.2" height="3.4" transform="rotate(270)"/><rect x="-1.6" y="-7.8" width="3.2" height="3.4" transform="rotate(315)"/></g><circle r="2.3" fill="#fff"/></g></svg>
<svg style="left:1352px;top:524.0px" width="5" height="3"><path d="M0 0 H5 L2.5 3 Z" fill="#222"/></svg>
<svg style="left:1410px;top:517px" width="16" height="16"><path d="M13.5 9 A6 6 0 1 1 11.5 3.5" fill="none" stroke="#cdd6e0" stroke-width="2.2"/><path d="M14.5 0.5 V6.5 H8.5 Z" fill="#cdd6e0"/></svg>
<div class="a" style="left:926px;top:535px;width:504px;height:20px;background:#f3f6f7"></div>
<div class="a" style="left:926px;top:555px;width:504px;height:1px;background:#d5d8dc"></div>
<div class="a" style="left:930px;top:537px;width:13px;height:13px;background:#fff;border:1px solid #9a9a9a;border-radius:2px"></div>
<svg style="left:951px;top:537px" width="17" height="16"><path d="M1 8 L8.5 1 L16 8" fill="none" stroke="#c0392b" stroke-width="1.8"/><path d="M3.5 7 V15 H13.5 V7 L8.5 2.5 Z" fill="#f4f4f4" stroke="#8f8f8f" stroke-width="0.8"/><rect x="7" y="10" width="3" height="5" fill="#9b6b3a"/></svg>
<div class="t" style="left:975.3px;top:538px;font-size:11.5px;color:#2f3bb8;letter-spacing:0px">Home</div>
<svg style="left:1013px;top:541px" width="5" height="9"><path d="M0.5 0.5 L4.5 4.5 L0.5 8.5" fill="none" stroke="#b0b0b0" stroke-width="0.9"/></svg>
<div class="t" style="left:1023.5px;top:538px;font-size:11.5px;color:#2f3bb8;letter-spacing:-0.05px">BioConnect_Data</div>
<svg style="left:1120px;top:541px" width="5" height="9"><path d="M0.5 0.5 L4.5 4.5 L0.5 8.5" fill="none" stroke="#b0b0b0" stroke-width="0.9"/></svg>
<div class="t" style="left:1130.5px;top:538px;font-size:11.5px;color:#2f3bb8;letter-spacing:-0.3px">JAXDP00006X</div>
<div class="a" style="left:1410px;top:535px;width:1px;height:20px;background:#d5d8dc"></div>
<div class="t" style="left:1416px;top:542px;font-size:10px;color:#555">...</div>
<div class="a" style="left:926px;top:556px;width:504px;height:18px;background:#f3f6f7"></div>
<div class="a" style="left:926px;top:574px;width:504px;height:1px;background:#d9dcdf"></div>
<div class="a" style="left:955px;top:556px;width:1px;height:18px;background:#d9dcdf"></div>
<div class="a" style="left:981px;top:556px;width:1px;height:18px;background:#d9dcdf"></div>
<div class="a" style="left:1190px;top:556px;width:1px;height:18px;background:#d9dcdf"></div>
<div class="a" style="left:1269px;top:556px;width:1px;height:18px;background:#d9dcdf"></div>
<svg style="left:991px;top:562px" width="10" height="6"><path d="M0 6 L5 0 L10 6 Z" fill="#7d838a"/></svg>
<div class="t" style="left:1005.5px;top:560px;font-size:11.5px;color:#555;letter-spacing:-0.35px">Name</div>
<div class="t" style="left:1195.8px;top:560px;font-size:11.5px;color:#555;letter-spacing:-0.25px">Size</div>
<div class="t" style="left:1276px;top:560px;font-size:11.5px;color:#555;letter-spacing:0.1px">Modified</div>
<svg style="left:961px;top:578px" width="15" height="14"><path d="M7 0.5 L12.5 6 H9.5 V10.5 H14.5 V13.5 H6 V6 H1.5 Z" fill="#22b063"/></svg>
<div class="t" style="left:985.5px;top:581px;font-size:12px;color:#2b22a8">..</div>
<div class="a" style="left:937px;top:601px;width:13px;height:13px;background:#fff;border:1px solid #a8a8a8;border-radius:2.5px"></div>
<svg style="left:962px;top:601px" width="16" height="14"><path d="M0.5 2.5 H6 L7.5 4 H15 V13.5 H0.5 Z" fill="#f0cf6a" stroke="#d4ad47" stroke-width="0.8"/><path d="M0.5 5.5 H15.5 V13.5 H0.5 Z" fill="#f6dc7f" stroke="#d4ad47" stroke-width="0.8"/></svg>
<div class="t" style="left:985.5px;top:604px;font-size:12.1px;color:#2b22a8;letter-spacing:0.29px">file_types</div>
<div class="a" style="left:937px;top:624px;width:13px;height:13px;background:#fff;border:1px solid #a8a8a8;border-radius:2.5px"></div>
<svg style="left:963px;top:623px" width="14" height="15"><path d="M0.5 0.5 H9 L13 4.5 V14.5 H0.5 Z" fill="#fff" stroke="#c4c8cc" stroke-width="0.9"/><path d="M9 0.5 V4.5 H13" fill="none" stroke="#c4c8cc" stroke-width="0.9"/></svg>
<div class="t" style="left:985.5px;top:627px;font-size:12.1px;color:#2b22a8;letter-spacing:0.05px">README.txt</div>
<div class="t" style="left:1193.3px;top:627px;font-size:12.1px;color:#222;letter-spacing:0.25px">664 B</div>
<div class="t" style="left:1272.5px;top:627px;font-size:12.1px;color:#222;letter-spacing:0.6px">Jul 3, 2024, 11:51 AM</div>
<div class="a" style="left:937px;top:647px;width:13px;height:13px;background:#fff;border:1px solid #a8a8a8;border-radius:2.5px"></div>
<svg style="left:963px;top:646px" width="14" height="15"><path d="M0.5 0.5 H9 L13 4.5 V14.5 H0.5 Z" fill="#fff" stroke="#c4c8cc" stroke-width="0.9"/><path d="M9 0.5 V4.5 H13" fill="none" stroke="#c4c8cc" stroke-width="0.9"/><circle cx="4.8" cy="6.5" r="4.6" fill="#2aa5c8"/><text x="1.9" y="8.3" font-family="Liberation Sans" font-size="4.8" font-weight="bold" fill="#fff">JS</text></svg>
<div class="t" style="left:985.5px;top:650px;font-size:12.1px;color:#2b22a8;letter-spacing:0.43px">ro-crate-metadata.json</div>
<div class="t" style="left:1193.3px;top:650px;font-size:12.1px;color:#222;letter-spacing:0.25px">2.1 MB</div>
<div class="t" style="left:1272.5px;top:650px;font-size:12.1px;color:#222;letter-spacing:0.6px">Jul 3, 2024, 11:51 AM</div>
<div class="a" style="left:937px;top:670px;width:13px;height:13px;background:#fff;border:1px solid #a8a8a8;border-radius:2.5px"></div>
<svg style="left:963px;top:669px" width="14" height="15"><path d="M0.5 0.5 H9 L13 4.5 V14.5 H0.5 Z" fill="#fff" stroke="#c4c8cc" stroke-width="0.9"/><path d="M9 0.5 V4.5 H13" fill="none" stroke="#c4c8cc" stroke-width="0.9"/><circle cx="4.8" cy="6.5" r="4.6" fill="#3d8fd8"/><path d="M2.5 3.5 Q5 4.5 4 7 Q6 8 5.5 10.5 M6.5 2.5 Q8 4 7.5 5" fill="none" stroke="#e9b030" stroke-width="1.6"/></svg>
<div class="t" style="left:985.5px;top:673px;font-size:12.1px;color:#2b22a8;letter-spacing:0.48px">ro-crate-preview.html</div>
<div class="t" style="left:1193.3px;top:673px;font-size:12.1px;color:#222;letter-spacing:0.25px">33.3 KB</div>
<div class="t" style="left:1272.5px;top:673px;font-size:12.1px;color:#222;letter-spacing:0.6px">Jul 3, 2024, 11:51 AM</div>
<div class="a" style="left:937px;top:693px;width:13px;height:13px;background:#fff;border:1px solid #a8a8a8;border-radius:2.5px"></div>
<svg style="left:963px;top:692px" width="14" height="15"><path d="M0.5 0.5 H9 L13 4.5 V14.5 H0.5 Z" fill="#fff" stroke="#c4c8cc" stroke-width="0.9"/><path d="M9 0.5 V4.5 H13" fill="none" stroke="#c4c8cc" stroke-width="0.9"/></svg>
<div class="t" style="left:985.5px;top:696px;font-size:12.1px;color:#2b22a8;letter-spacing:0.22px">2021_CUBE_Liver_C18negative_...</div>
<div class="t" style="left:1193.3px;top:696px;font-size:12.1px;color:#222;letter-spacing:0.25px">20.7 MB</div>
<div class="t" style="left:1272.5px;top:696px;font-size:12.1px;color:#222;letter-spacing:0.6px">Jul 3, 2024, 11:51 AM</div>
<div class="a" style="left:937px;top:716px;width:13px;height:13px;background:#fff;border:1px solid #a8a8a8;border-radius:2.5px"></div>
<svg style="left:962px;top:716px" width="16" height="15"><rect x="0.5" y="0.5" width="14.5" height="13.5" rx="1" fill="#fff" stroke="#b9c0c8" stroke-width="0.9"/><rect x="0.5" y="0.5" width="14.5" height="2.5" fill="#dde2e8"/><path d="M0.5 5.5 H15 M0.5 8.3 H15 M0.5 11.1 H15 M4.2 0.5 V14 M7.8 0.5 V14 M11.4 0.5 V14" stroke="#c9cfd6" stroke-width="0.6"/></svg>
<div class="t" style="left:985.5px;top:719px;font-size:12.1px;color:#2b22a8;letter-spacing:0.22px">2021_CUBE_Liver_C18negative_...</div>
<div class="t" style="left:1193.3px;top:719px;font-size:12.1px;color:#222;letter-spacing:0.25px">3.9 KB</div>
<div class="t" style="left:1272.5px;top:719px;font-size:12.1px;color:#222;letter-spacing:0.6px">Jul 3, 2024, 11:51 AM</div>
<div class="a" style="left:937px;top:739px;width:13px;height:13px;background:#fff;border:1px solid #a8a8a8;border-radius:2.5px"></div>
<svg style="left:963px;top:738px" width="14" height="15"><path d="M0.5 0.5 H9 L13 4.5 V14.5 H0.5 Z" fill="#fff" stroke="#c4c8cc" stroke-width="0.9"/><path d="M9 0.5 V4.5 H13" fill="none" stroke="#c4c8cc" stroke-width="0.9"/></svg>
<div class="t" style="left:985.5px;top:742px;font-size:12.1px;color:#2b22a8;letter-spacing:0.22px">2021_CUBE_Liver_C18positive_A...</div>
<div class="t" style="left:1193.3px;top:742px;font-size:12.1px;color:#222;letter-spacing:0.25px">28.9 MB</div>
<div class="t" style="left:1272.5px;top:742px;font-size:12.1px;color:#222;letter-spacing:0.6px">Jul 3, 2024, 11:51 AM</div>
<div class="a" style="left:937px;top:762px;width:13px;height:13px;background:#fff;border:1px solid #a8a8a8;border-radius:2.5px"></div>
<svg style="left:962px;top:762px" width="16" height="15"><rect x="0.5" y="0.5" width="14.5" height="13.5" rx="1" fill="#fff" stroke="#b9c0c8" stroke-width="0.9"/><rect x="0.5" y="0.5" width="14.5" height="2.5" fill="#dde2e8"/><path d="M0.5 5.5 H15 M0.5 8.3 H15 M0.5 11.1 H15 M4.2 0.5 V14 M7.8 0.5 V14 M11.4 0.5 V14" stroke="#c9cfd6" stroke-width="0.6"/></svg>
<div class="t" style="left:985.5px;top:765px;font-size:12.1px;color:#2b22a8;letter-spacing:0.22px">2021_CUBE_Liver_C18positive_...</div>
<div class="t" style="left:1193.3px;top:765px;font-size:12.1px;color:#222;letter-spacing:0.25px">3.9 KB</div>
<div class="t" style="left:1272.5px;top:765px;font-size:12.1px;color:#222;letter-spacing:0.6px">Jul 3, 2024, 11:51 AM</div>
<div class="a" style="left:937px;top:785px;width:13px;height:13px;background:#fff;border:1px solid #a8a8a8;border-radius:2.5px"></div>
<svg style="left:963px;top:784px" width="14" height="15"><path d="M0.5 0.5 H9 L13 4.5 V14.5 H0.5 Z" fill="#fff" stroke="#c4c8cc" stroke-width="0.9"/><path d="M9 0.5 V4.5 H13" fill="none" stroke="#c4c8cc" stroke-width="0.9"/></svg>
<div class="t" style="left:985.5px;top:788px;font-size:12.1px;color:#2b22a8;letter-spacing:0.22px">2021_CUBE_Liver_Discovery_Pro...</div>
<div class="t" style="left:1193.3px;top:788px;font-size:12.1px;color:#222;letter-spacing:0.25px">58.8 MB</div>
<div class="t" style="left:1272.5px;top:788px;font-size:12.1px;color:#222;letter-spacing:0.6px">Jul 3, 2024, 11:51 AM</div>
<div class="a" style="left:937px;top:808px;width:13px;height:13px;background:#fff;border:1px solid #a8a8a8;border-radius:2.5px"></div>
<svg style="left:963px;top:807px" width="14" height="15"><path d="M0.5 0.5 H9 L13 4.5 V14.5 H0.5 Z" fill="#fff" stroke="#c4c8cc" stroke-width="0.9"/><path d="M9 0.5 V4.5 H13" fill="none" stroke="#c4c8cc" stroke-width="0.9"/></svg>
<div class="t" style="left:985.5px;top:811px;font-size:12.1px;color:#2b22a8;letter-spacing:0.22px">2021_CUBE_Liver_HILICnegative...</div>
<div class="t" style="left:1193.3px;top:811px;font-size:12.1px;color:#222;letter-spacing:0.25px">5.5 MB</div>
<div class="t" style="left:1272.5px;top:811px;font-size:12.1px;color:#222;letter-spacing:0.6px">Jul 3, 2024, 11:51 AM</div>
<div class="a" style="left:937px;top:831px;width:13px;height:13px;background:#fff;border:1px solid #a8a8a8;border-radius:2.5px"></div>
<svg style="left:962px;top:831px" width="16" height="15"><rect x="0.5" y="0.5" width="14.5" height="13.5" rx="1" fill="#fff" stroke="#b9c0c8" stroke-width="0.9"/><rect x="0.5" y="0.5" width="14.5" height="2.5" fill="#dde2e8"/><path d="M0.5 5.5 H15 M0.5 8.3 H15 M0.5 11.1 H15 M4.2 0.5 V14 M7.8 0.5 V14 M11.4 0.5 V14" stroke="#c9cfd6" stroke-width="0.6"/></svg>
<div class="t" style="left:985.5px;top:834px;font-size:12.1px;color:#2b22a8;letter-spacing:0.22px">2021_CUBE_Liver_HILICnegative...</div>
<div class="t" style="left:1193.3px;top:834px;font-size:12.1px;color:#222;letter-spacing:0.25px">3.9 KB</div>
<div class="t" style="left:1272.5px;top:834px;font-size:12.1px;color:#222;letter-spacing:0.6px">Jul 3, 2024, 11:51 AM</div>
<div class="a" style="left:937px;top:854px;width:13px;height:13px;background:#fff;border:1px solid #a8a8a8;border-radius:2.5px"></div>
<svg style="left:963px;top:853px" width="14" height="15"><path d="M0.5 0.5 H9 L13 4.5 V14.5 H0.5 Z" fill="#fff" stroke="#c4c8cc" stroke-width="0.9"/><path d="M9 0.5 V4.5 H13" fill="none" stroke="#c4c8cc" stroke-width="0.9"/></svg>
<div class="t" style="left:985.5px;top:857px;font-size:12.1px;color:#2b22a8;letter-spacing:0.22px">2021_CUBE_Liver_HILICpositive_...</div>
<div class="t" style="left:1193.3px;top:857px;font-size:12.1px;color:#222;letter-spacing:0.25px">9.9 MB</div>
<div class="t" style="left:1272.5px;top:857px;font-size:12.1px;color:#222;letter-spacing:0.6px">Jul 3, 2024, 11:51 AM</div>
<div class="a" style="left:937px;top:877px;width:13px;height:13px;background:#fff;border:1px solid #a8a8a8;border-radius:2.5px"></div>
<svg style="left:962px;top:877px" width="16" height="15"><rect x="0.5" y="0.5" width="14.5" height="13.5" rx="1" fill="#fff" stroke="#b9c0c8" stroke-width="0.9"/><rect x="0.5" y="0.5" width="14.5" height="2.5" fill="#dde2e8"/><path d="M0.5 5.5 H15 M0.5 8.3 H15 M0.5 11.1 H15 M4.2 0.5 V14 M7.8 0.5 V14 M11.4 0.5 V14" stroke="#c9cfd6" stroke-width="0.6"/></svg>
<div class="t" style="left:985.5px;top:880px;font-size:12.1px;color:#2b22a8;letter-spacing:0.22px">2021_CUBE_Liver_HILICpositive_...</div>
<div class="t" style="left:1193.3px;top:880px;font-size:12.1px;color:#222;letter-spacing:0.25px">3.9 KB</div>
<div class="t" style="left:1272.5px;top:880px;font-size:12.1px;color:#222;letter-spacing:0.6px">Jul 3, 2024, 11:51 AM</div>
<div class="a" style="left:937px;top:900px;width:13px;height:13px;background:#fff;border:1px solid #a8a8a8;border-radius:2.5px"></div>
<svg style="left:962px;top:900px" width="16" height="15"><rect x="0.5" y="0.5" width="14.5" height="13.5" rx="1" fill="#fff" stroke="#b9c0c8" stroke-width="0.9"/><rect x="0.5" y="0.5" width="14.5" height="2.5" fill="#dde2e8"/><path d="M0.5 5.5 H15 M0.5 8.3 H15 M0.5 11.1 H15 M4.2 0.5 V14 M7.8 0.5 V14 M11.4 0.5 V14" stroke="#c9cfd6" stroke-width="0.6"/></svg>
<div class="t" style="left:985.5px;top:903px;font-size:12.1px;color:#2b22a8;letter-spacing:0.4px">liver_metadata.csv</div>
<div class="t" style="left:1193.3px;top:903px;font-size:12.1px;color:#222;letter-spacing:0.25px">3.9 KB</div>
<div class="t" style="left:1272.5px;top:903px;font-size:12.1px;color:#222;letter-spacing:0.6px">Jul 3, 2024, 11:51 AM</div>
</body></html>
